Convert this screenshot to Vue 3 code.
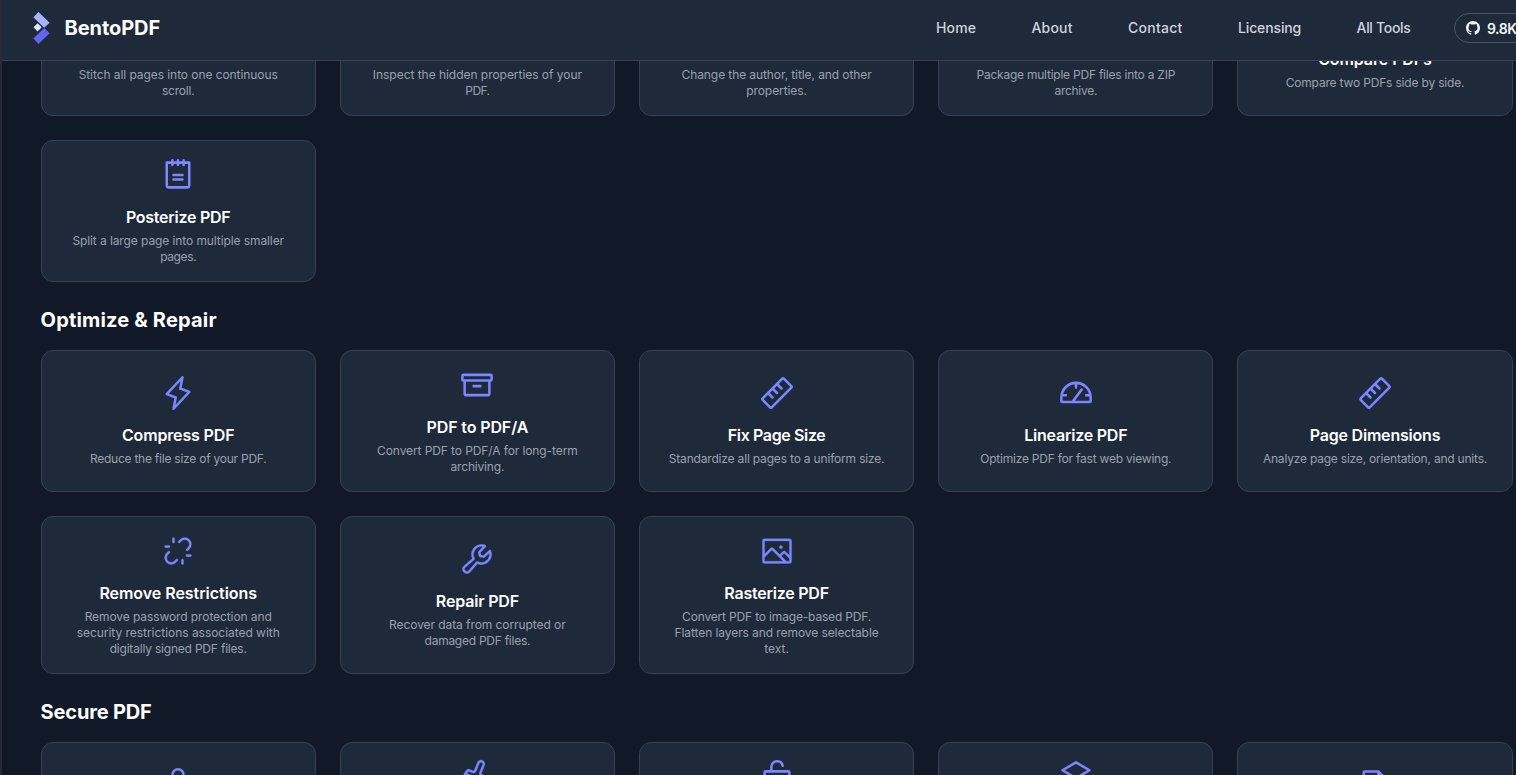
<script setup>
const FAMILY = 'Inter, "Noto Sans", sans-serif'
const ctx = document.createElement('canvas').getContext('2d')

// Letter spacing that sets a line of text to the given width.
function track(text, width, size, weight) {
  ctx.font = `${weight} ${size}px ${FAMILY}`
  const natural = ctx.measureText(text).width
  return { letterSpacing: ((width + 0.6 - natural) / text.length).toFixed(3) + 'px' }
}

const nav = [
  ['Home', 39.5],
  ['About', 40.5],
  ['Contact', 54],
  ['Licensing', 62.5],
  ['All Tools', 53.5],
]

const stroked = {
  notepad: 'M48,40H208V200a16,16,0,0,1-16,16H64a16,16,0,0,1-16-16ZM88,24V56M128,24V56M168,24V56M96,128H160M96,160H160',
  lightning: 'M96,240L112,160L48,136L160,16L144,96L208,120Z',
  archive: 'M32,56H224a8,8,0,0,1,8,8V88a8,8,0,0,1-8,8H32a8,8,0,0,1-8-8V64A8,8,0,0,1,32,56ZM216,96v96a8,8,0,0,1-8,8H48a8,8,0,0,1-8-8V96M104,136H152',
  ruler: 'M26.3,165.7L165.7,26.3a8,8,0,0,1,11.3,0L229.7,79a8,8,0,0,1,0,11.3L90.3,229.7a8,8,0,0,1-11.3,0L26.3,177A8,8,0,0,1,26.3,165.7ZM64,128L96,160M96,96L128,128M128,64L160,96',
  gauge: 'M24,184V161.13C24,103.65,70.15,56.2,127.63,56A104,104,0,0,1,232,160v24a8,8,0,0,1-8,8H32A8,8,0,0,1,24,184ZM128,58V88M28,144H56M200,144H228M104,190L168,104',
  lock: 'M48,88H208a8,8,0,0,1,8,8V208a8,8,0,0,1-8,8H48a8,8,0,0,1-8-8V96A8,8,0,0,1,48,88ZM88,88V56a40,40,0,0,1,80,0V88',
  lockOpen: 'M48,88H208a8,8,0,0,1,8,8V208a8,8,0,0,1-8,8H48a8,8,0,0,1-8-8V96A8,8,0,0,1,48,88ZM88,88V56a40,40,0,0,1,40-40c19.35,0,36.29,13.74,40,32',
  stack: 'M32,80L128,24L224,80L128,136ZM32,128L128,184L224,128M32,176L128,232L224,176',
  file: 'M48,112V40a8,8,0,0,1,8-8h96l56,56V216M152,32V88H208',
}

const filled = {
  linkBreak: 'M198.63,57.37a32,32,0,0,0-45.19-.06L141.79,69.52a8,8,0,0,1-11.58-11l11.72-12.29a1.59,1.59,0,0,1,.13-.13,48,48,0,0,1,67.88,67.88,1.59,1.59,0,0,1-.13.13l-12.29,11.72a8,8,0,0,1-11-11.58l12.21-11.65A32,32,0,0,0,198.63,57.37ZM114.21,186.48l-11.65,12.21a32,32,0,0,1-45.25-45.25l12.21-11.65a8,8,0,0,0-11-11.58L46.19,141.93a1.59,1.59,0,0,0-.13.13,48,48,0,0,0,67.88,67.88,1.59,1.59,0,0,0,.13-.13l11.72-12.29a8,8,0,1,0-11.58-11ZM216,152H192a8,8,0,0,0,0,16h24a8,8,0,0,0,0-16ZM40,104H64a8,8,0,0,0,0-16H40a8,8,0,0,0,0,16Zm120,80a8,8,0,0,0-8,8v24a8,8,0,0,0,16,0V192A8,8,0,0,0,160,184ZM96,72a8,8,0,0,0,8-8V40a8,8,0,0,0-16,0V64A8,8,0,0,0,96,72Z',
  wrench: 'M226.76,69a8,8,0,0,0-12.84-2.88l-40.3,37.19-17.23-3.7-3.7-17.23,37.19-40.3A8,8,0,0,0,187,29.24,72,72,0,0,0,88,96,72.34,72.34,0,0,0,94,124.94L33.79,177c-.15.12-.29.26-.43.39a32,32,0,0,0,45.26,45.26c.13-.13.27-.28.39-.42L131.06,162A72,72,0,0,0,232,96,71.56,71.56,0,0,0,226.76,69ZM160,152a56.14,56.14,0,0,1-27.07-7,8,8,0,0,0-9.92,1.77L67.11,211.51a16,16,0,0,1-22.62-22.62L109.18,133a8,8,0,0,0,1.77-9.93,56,56,0,0,1,58.36-82.31l-31.2,33.81a8,8,0,0,0-1.94,7.1L141.83,108a8,8,0,0,0,6.14,6.14l26.35,5.66a8,8,0,0,0,7.1-1.94l33.81-31.2A56.06,56.06,0,0,1,160,152Z',
  image: 'M216,40H40A16,16,0,0,0,24,56V200a16,16,0,0,0,16,16H216a16,16,0,0,0,16-16V56A16,16,0,0,0,216,40Zm0,16V158.75l-26.07-26.06a16,16,0,0,0-22.63,0l-20,20-44-44a16,16,0,0,0-22.62,0L40,149.37V56ZM40,172l52-52,80,80H40Zm176,28H194.63l-36-36,20-20L216,181.38V200ZM144,100a12,12,0,1,1,12,12A12,12,0,0,1,144,100Z',
  broom: 'M235.5,216.81c-22.56-11-35.5-34.58-35.5-64.8V134.73a15.94,15.94,0,0,0-10.09-14.87L165,110a8,8,0,0,1-4.48-10.34l21.32-53a28,28,0,0,0-16.1-37,28.14,28.14,0,0,0-35.82,16,.61.61,0,0,0,0,.12L108.9,79a8,8,0,0,1-10.37,4.49L73.11,73.14A15.89,15.89,0,0,0,55.74,76.8C34.68,98.45,24,123.75,24,152a111.45,111.45,0,0,0,31.18,77.53A8,8,0,0,0,61,232H232a8,8,0,0,0,3.5-15.19ZM67.14,88l25.41,10.3a24,24,0,0,0,31.23-13.45l21-53c2.56-6.11,9.47-9.27,15.43-7a12,12,0,0,1,6.88,15.92L145.69,93.76a24,24,0,0,0,13.43,31.14L184,134.73V152c0,.33,0,.66,0,1L55.77,101.71A108.84,108.84,0,0,1,67.14,88Z',
}

const groups = [
  {
    cards: [
      { edge: 'end', lines: [['Stitch all pages into one continuous', 198.5], ['scroll.', 32]] },
      { edge: 'end', lines: [['Inspect the hidden properties of your', 208.5], ['PDF.', 23.5]] },
      { edge: 'end', lines: [['Change the author, title, and other', 189.5], ['properties.', 60]] },
      { edge: 'end', lines: [['Package multiple PDF files into a ZIP', 198], ['archive.', 42]] },
      { edge: 'end-inset', title: ['Compare PDFs', 113], lines: [['Compare two PDFs side by side.', 178]] },
      { icon: 'notepad', title: ['Posterize PDF', 104], lines: [['Split a large page into multiple smaller', 211], ['pages.', 35.5]] },
    ],
  },
  {
    heading: ['Optimize & Repair', 175.5],
    cards: [
      { icon: 'lightning', title: ['Compress PDF', 112], lines: [['Reduce the file size of your PDF.', 176]] },
      { icon: 'archive', title: ['PDF to PDF/A', 101], lines: [['Convert PDF to PDF/A for long-term', 200], ['archiving.', 53]] },
      { icon: 'ruler', title: ['Fix Page Size', 97], lines: [['Standardize all pages to a uniform size.', 215]] },
      { icon: 'gauge', title: ['Linearize PDF', 102.5], lines: [['Optimize PDF for fast web viewing.', 190.5]] },
      { icon: 'ruler', title: ['Page Dimensions', 130], lines: [['Analyze page size, orientation, and units.', 223.5]] },
      { icon: 'linkBreak', title: ['Remove Restrictions', 157], lines: [['Remove password protection and', 186.5], ['security restrictions associated with', 202.5], ['digitally signed PDF files.', 136.5]] },
      { icon: 'wrench', title: ['Repair PDF', 82.5], lines: [['Recover data from corrupted or', 176], ['damaged PDF files.', 105]] },
      { icon: 'image', title: ['Rasterize PDF', 104], lines: [['Convert PDF to image-based PDF.', 188.5], ['Flatten layers and remove selectable', 203.5], ['text.', 24]] },
    ],
  },
  {
    heading: ['Secure PDF', 110.5],
    cards: [
      { edge: 'start-inset', icon: 'lock' },
      { edge: 'start', icon: 'broom' },
      { edge: 'start', icon: 'lockOpen' },
      { edge: 'start', icon: 'stack' },
      { edge: 'start-inset', icon: 'file' },
    ],
  },
]
</script>

<template>
  <div class="page">
    <header class="topbar">
      <div class="brand">
        <svg class="logo" width="17" height="32" viewBox="0 0 17 32">
          <path d="M5.5 0L16.6 10.8L11.2 15.7L0.4 5.2Z" fill="#a5b4fc" />
          <path d="M4.6 11.2L8.7 15.3L4.6 19.4L0.5 15.3Z" fill="#e0e7ff" />
          <path d="M11.2 16L16.6 21.2L5.5 32L0.4 26.6Z" fill="#6366f1" />
        </svg>
        <span class="brand-name" :style="track('BentoPDF', 95, 20, 700)">BentoPDF</span>
      </div>
      <nav class="links">
        <a v-for="[label, w] in nav" :key="label" class="link" :style="{ width: w + 'px', ...track(label, w, 14, 500) }">{{ label }}</a>
        <a class="stars">
          <svg width="14" height="14" viewBox="0 0 16 16" fill="currentColor">
            <path d="M8 0C3.58 0 0 3.58 0 8c0 3.54 2.29 6.53 5.47 7.59.4.07.55-.17.55-.38 0-.19-.01-.82-.01-1.49-2.01.37-2.53-.49-2.69-.94-.09-.23-.48-.94-.82-1.13-.28-.15-.68-.52-.01-.53.63-.01 1.08.58 1.23.82.72 1.21 1.87.87 2.33.66.07-.52.28-.87.51-1.07-1.78-.2-3.64-.89-3.64-3.95 0-.87.31-1.59.82-2.15-.08-.2-.36-1.02.08-2.12 0 0 .67-.21 2.2.82.64-.18 1.32-.27 2-.27s1.36.09 2 .27c1.53-1.04 2.2-.82 2.2-.82.44 1.1.16 1.92.08 2.12.51.56.82 1.27.82 2.15 0 3.07-1.87 3.75-3.65 3.95.29.25.54.73.54 1.48 0 1.07-.01 1.93-.01 2.2 0 .21.15.46.55.38A8.01 8.01 0 0 0 16 8c0-4.42-3.58-8-8-8z" />
          </svg>
          <span :style="track('9.8K', 29, 14, 600)">9.8K</span>
        </a>
      </nav>
    </header>

    <main class="content">
      <section v-for="(group, g) in groups" :key="g" class="group">
        <h2 v-if="group.heading" class="heading">
          <span :style="track(group.heading[0], group.heading[1], 20, 700)">{{ group.heading[0] }}</span>
        </h2>
        <div class="grid">
          <article v-for="(card, c) in group.cards" :key="c" class="card" :class="card.edge">
            <svg v-if="card.icon" class="icon" width="36" height="36" viewBox="0 0 256 256">
              <path v-if="stroked[card.icon]" class="stroke" :d="stroked[card.icon]" />
              <path v-else class="fill" :d="filled[card.icon]" />
            </svg>
            <h3 v-if="card.title" class="title" :style="track(card.title[0], card.title[1], 16, 600)">{{ card.title[0] }}</h3>
            <p v-if="card.lines" class="desc">
              <span v-for="[text, w] in card.lines" :key="text" class="line" :style="track(text, w, 12, 400)">{{ text }}</span>
            </p>
          </article>
        </div>
      </section>
    </main>
  </div>
</template>

<style>
html,
body {
  background: #111827;
  overflow: hidden;
}
</style>

<style scoped>
.page {
  box-sizing: border-box;
  width: 1516px;
  height: 775px;
  overflow: hidden;
  border-left: 2px solid #292a37;
  background: #111827;
  color: #fff;
  font-family: Inter, "Noto Sans", sans-serif;
}
.topbar {
  position: relative;
  z-index: 1;
  box-sizing: border-box;
  display: flex;
  justify-content: space-between;
  height: 61px;
  padding: 0 0 4px 30.5px;
  border-bottom: 1px solid #364153;
  background: #1e2939;
}
.brand {
  display: flex;
  align-items: center;
  gap: 15px;
}
.logo {
  display: block;
}
.brand-name {
  font-size: 20px;
  font-weight: 700;
  line-height: 28px;
  white-space: nowrap;
}
.links {
  display: flex;
  align-items: center;
  width: 580px;
  gap: 56px;
}
.link {
  flex: none;
  color: #d1d5dc;
  font-size: 14px;
  font-weight: 500;
  line-height: 20px;
  white-space: nowrap;
}
.stars {
  box-sizing: border-box;
  flex: none;
  display: flex;
  align-items: center;
  gap: 7px;
  width: 80px;
  height: 30px;
  margin-left: -12px;
  padding-left: 11px;
  border: 1px solid #4a5565;
  border-radius: 15px;
  color: #f3f4f6;
  font-size: 14px;
  font-weight: 600;
  white-space: nowrap;
}
.content {
  width: 1472px;
  margin: -87px 0 0 38.6px;
}
.group {
  margin-bottom: 24px;
}
.heading {
  margin: 0 0 16px;
  font-size: 20px;
  font-weight: 700;
  line-height: 28px;
}
.grid {
  display: grid;
  grid-template-columns: repeat(5, minmax(0, 1fr));
  gap: 24px;
}
.card {
  box-sizing: border-box;
  display: flex;
  flex-direction: column;
  align-items: center;
  justify-content: center;
  min-height: 142px;
  padding: 16px 0;
  border: 1px solid #364153;
  border-radius: 12px;
  background: #1e2939;
  text-align: center;
}
.end {
  justify-content: flex-end;
}
.end-inset {
  justify-content: flex-end;
  padding-bottom: 24px;
}
.start {
  justify-content: flex-start;
}
.start-inset {
  justify-content: flex-start;
  padding-top: 24px;
}
.icon {
  display: block;
  flex: none;
  margin-bottom: 12px;
}
.stroke {
  fill: none;
  stroke: #7c86ff;
  stroke-width: 18;
  stroke-linecap: round;
  stroke-linejoin: round;
}
.fill {
  fill: #7c86ff;
  stroke: #7c86ff;
  stroke-width: 2;
}
.title {
  margin: 0;
  font-size: 16px;
  font-weight: 600;
  line-height: 24px;
  white-space: nowrap;
}
.desc {
  margin: 4px 0 0;
  color: #99a1af;
  font-size: 12px;
  line-height: 16px;
}
.line {
  display: block;
  white-space: nowrap;
}
</style>
